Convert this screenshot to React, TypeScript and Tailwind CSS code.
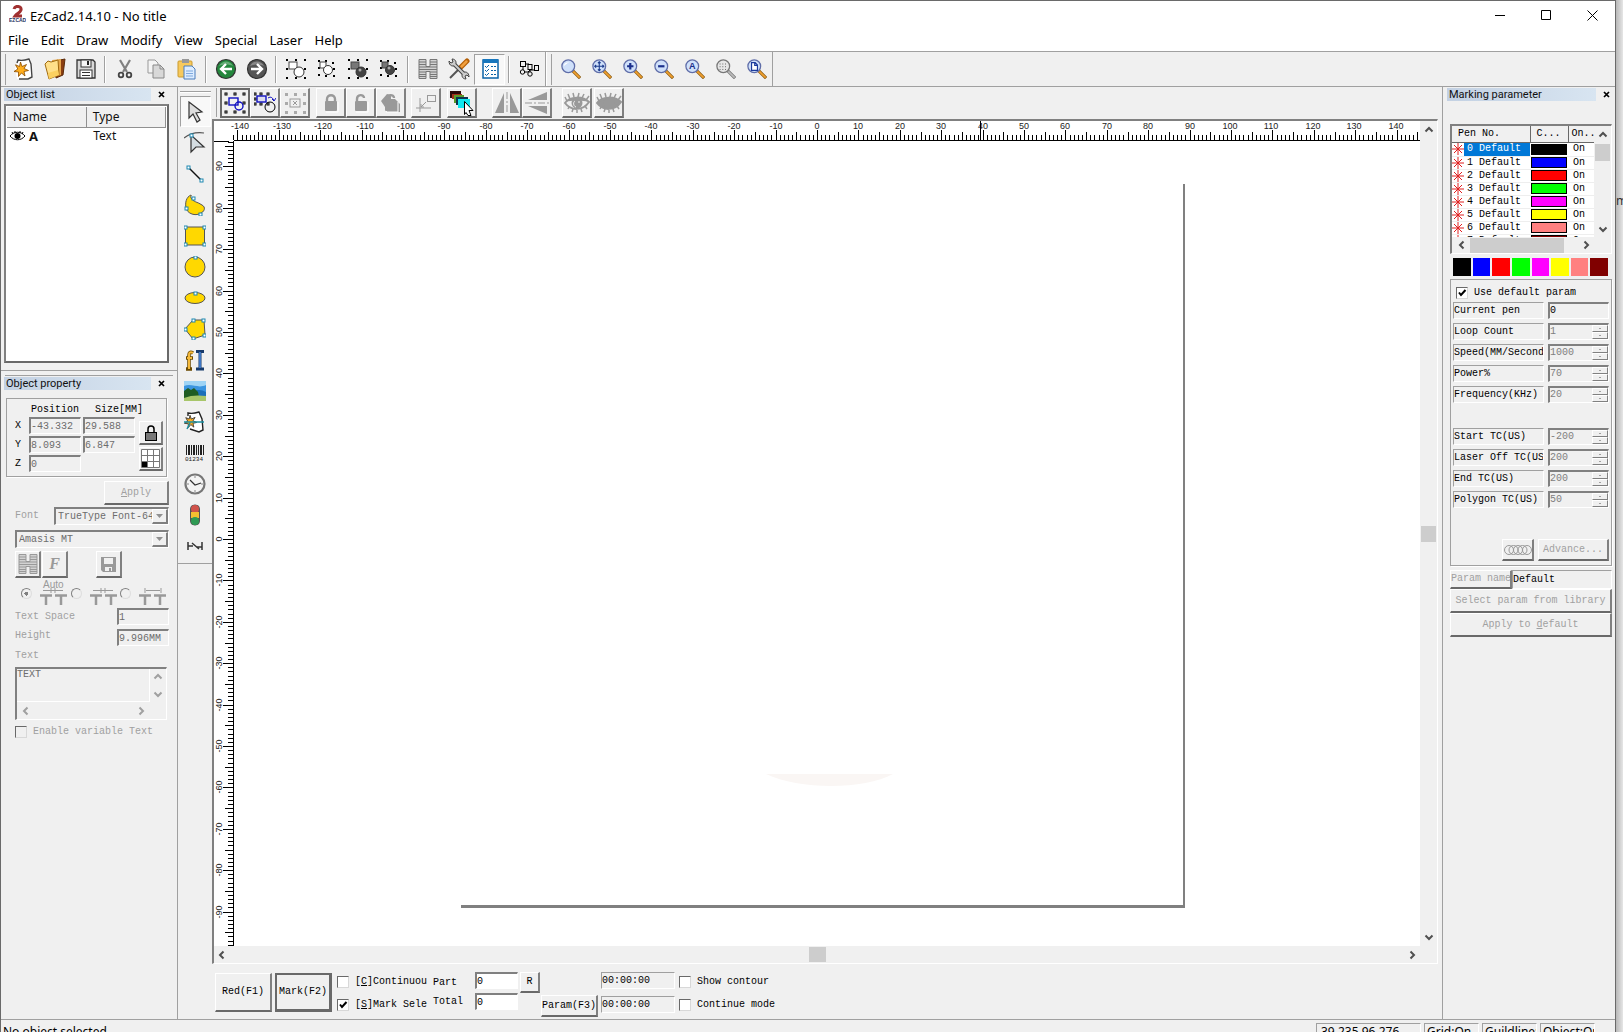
import type { ReactNode } from 'react'

const mono = "font-['Liberation_Mono','Noto_Sans_CJK_SC',monospace] text-[10px] leading-3"
const raised = 'border border-t-white border-l-white border-r-2 border-b-2 border-r-[#808080] border-b-[#696969] bg-[#f0f0f0]'
const sunken = 'border-t-2 border-l-2 border-r border-b border-t-[#808080] border-l-[#808080] border-r-white border-b-white'
const thinSunken = 'border border-t-[#a0a0a0] border-l-[#a0a0a0] border-r-white border-b-white'

const menus = ['File', 'Edit', 'Draw', 'Modify', 'View', 'Special', 'Laser', 'Help']

const pens = [
  { name: 'Default', color: 'bg-black' },
  { name: 'Default', color: 'bg-[#0000ff]' },
  { name: 'Default', color: 'bg-[#ff0000]' },
  { name: 'Default', color: 'bg-[#00ff00]' },
  { name: 'Default', color: 'bg-[#ff00ff]' },
  { name: 'Default', color: 'bg-[#ffff00]' },
  { name: 'Default', color: 'bg-[#ff8080]' },
  { name: 'Default', color: 'bg-[#800000]' },
]

const params = [
  { label: 'Current pen', value: '0' },
  { label: 'Loop Count', value: '1' },
  { label: 'Speed(MM/Second', value: '1000' },
  { label: 'Power%', value: '70' },
  { label: 'Frequency(KHz)', value: '20' },
  null,
  { label: 'Start TC(US)', value: '-200' },
  { label: 'Laser Off TC(US', value: '200' },
  { label: 'End TC(US)', value: '200' },
  { label: 'Polygon TC(US)', value: '50' },
]

function Icon({ children, size = 22 }: { children: ReactNode; size?: number }) {
  return (
    <svg width={size} height={size} viewBox="0 0 22 22" fill="none" className="shrink-0" aria-hidden="true">
      {children}
    </svg>
  )
}

function Arrow({ dir, color = '#505050' }: { dir: 'up' | 'down' | 'left' | 'right'; color?: string }) {
  const d = {
    up: 'M1.5 6.5L5 3L8.5 6.5',
    down: 'M1.5 3.5L5 7L8.5 3.5',
    left: 'M6.5 1.5L3 5L6.5 8.5',
    right: 'M3.5 1.5L7 5L3.5 8.5',
  }[dir]
  return (
    <svg width="10" height="10" viewBox="0 0 10 10" fill="none" className="shrink-0" aria-hidden="true">
      <path d={d} stroke={color} strokeWidth="2" />
    </svg>
  )
}

/* ---------- icons ---------- */

function Dots({ pts, color = '#000', size = 2 }: { pts: number[][]; color?: string; size?: number }) {
  return (
    <>
      {pts.map(([x, y]) => (
        <rect key={`${x}-${y}`} x={x} y={y} width={size} height={size} fill={color} />
      ))}
    </>
  )
}

const outerDots = [[1, 1], [10, 1], [19, 1], [1, 10], [19, 10], [1, 19], [10, 19], [19, 19]]
const innerDots = [[2, 2], [9, 2], [16, 4], [2, 9], [2, 16], [9, 17], [17, 10], [17, 17]]

const star = 'M10 5l1.500 4.500 4.500-2-2.500 4 4.500 2-4.500 1 1 4.500-3.500-3-3 3.500 0-4.500-4.500-.5 3.800-2.500-2.300-4.200 4 1.700z'

const NewIcon = () => (
  <Icon>
    <path d="M6 2c4 1 8 0 11-1l2 5 1 13-4 2H4L2 10z" fill="#fff" />
    <path d="M4 5l1-3c4 1 8 0 11-1l2 5 1 13-4 2-9 0" stroke="#444" strokeWidth="1.400" />
    <path d={star} transform="translate(-2.500 -1)" fill="#ffae1c" stroke="#8a4a00" strokeWidth=".8" />
  </Icon>
)
const OpenIcon = () => (
  <Icon>
    <path d="M11 3l10-2-2 16-7 3z" fill="#8b3f12" stroke="#5a2a0a" />
    <path d="M8 2l9-1 0 16-8 2z" fill="#e8a84c" />
    <path d="M1 6l3-3 3 1 7-2 1 15-10 4z" fill="#ffe08a" stroke="#a06a10" />
    <path d="M4 15l10-3 1 5-10 4z" fill="#fbd060" />
  </Icon>
)
const SaveIcon = () => (
  <Icon>
    <path d="M2 2h16l2 2v16H2z" fill="#d9d9d9" stroke="#333" strokeWidth="1.300" />
    <rect x="6" y="2" width="10" height="7" fill="#f6f6f6" stroke="#333" />
    <rect x="12" y="3" width="2" height="4" fill="#222" />
    <rect x="5" y="12" width="12" height="8" fill="#fff" stroke="#333" />
    <path d="M7 14.500h8M7 17.500h8" stroke="#333" />
  </Icon>
)
const CutIcon = () => (
  <Icon>
    <path d="M6 2l7 12M16 2L9 14" stroke="#808080" strokeWidth="2.200" />
    <circle cx="7" cy="17" r="2.300" stroke="#444" strokeWidth="1.800" />
    <circle cx="15" cy="17" r="2.300" stroke="#444" strokeWidth="1.800" />
  </Icon>
)
const CopyIcon = () => (
  <Icon>
    <path d="M3 2h7l3 3v10H3z" fill="#f4f4f4" stroke="#999" />
    <path d="M8 7h7l4 4v9H8z" fill="#d8d8d8" stroke="#888" />
    <path d="M15 7v4h4" stroke="#888" />
  </Icon>
)
const PasteIcon = () => (
  <Icon>
    <rect x="2" y="3" width="14" height="16" rx="1" fill="#f7c95c" stroke="#c99a2e" />
    <rect x="6" y="1" width="7" height="4" fill="#999" />
    <path d="M8 8h8l3 3v10H8z" fill="#dcecff" stroke="#4a7dbb" />
    <path d="M10 13h7M10 15.500h7M10 18h7" stroke="#7fa9dd" />
  </Icon>
)
const RoundArrow = ({ fill, left }: { fill: string; left?: boolean }) => (
  <Icon>
    <circle cx="11" cy="11" r="9.500" fill={fill} stroke="#333" strokeWidth="1.200" />
    <path d="M4 8c3-6 11-6 14 0-5-2-9-2-14 0z" fill="#fff" opacity=".3" />
    <path
      d={left ? 'M17 11H6.500M11 6l-5 5 5 5' : 'M5 11h10.500M11 6l5 5-5 5'}
      stroke="#fff"
      strokeWidth="2.400"
    />
  </Icon>
)
const GroupIcon = ({ filled, small }: { filled?: boolean; small?: boolean }) => (
  <Icon>
    <Dots pts={small ? innerDots : outerDots} />
    <rect x="4" y="4" width={small ? 6 : 8} height={small ? 6 : 7} fill={filled ? '#777' : '#fff'} stroke="#444" />
    <circle cx={small ? 12 : 14} cy={small ? 12 : 14} r={small ? 4.5 : 5} fill={filled ? '#444' : '#fff'} stroke="#333" />
    {filled && <circle cx={small ? 11 : 13} cy={small ? 10 : 12} r="1.500" fill="#aaa" />}
  </Icon>
)
const HatchIcon = ({ color = '#777' }: { color?: string }) => (
  <Icon>
    <path d="M2 1.500h7v7h4v-7h7v19h-7v-7H9v7H2z" fill="#d2d2d2" stroke={color} />
    <path d="M2 4h7M2 6.500h7M2 9h18M2 11.500h18M2 14h7M2 16.500h7M2 18.500h7M13 4h7M13 6.500h7M13 14h7M13 16.500h7M13 18.500h7" stroke={color} />
  </Icon>
)
const ToolsIcon = () => (
  <Icon>
    <path d="M2 20L13 9" stroke="#555" strokeWidth="2" />
    <path d="M13 9l6-6" stroke="#b45f06" strokeWidth="5" strokeLinecap="round" />
    <path d="M13.500 8.500l5-5" stroke="#f0a040" strokeWidth="2.500" strokeLinecap="round" />
    <path d="M5 5l12 12" stroke="#444" strokeWidth="4" />
    <path d="M1 3c0 5 4 6 6 4 2-2 1-6-3-6l1 3-2 1zM21 19c0-5-4-6-6-4-2 2-1 6 3 6l-1-3 2-1z" fill="#ccc" stroke="#444" />
    <path d="M5 5l12 12" stroke="#ccc" strokeWidth="2" />
  </Icon>
)
const ParamListIcon = () => (
  <Icon>
    <rect x="4" y="2" width="15" height="18" fill="#fff" stroke="#0a63a8" strokeWidth="1.500" />
    <rect x="4" y="1" width="15" height="4" fill="#1877bd" />
    <path d="M6 8l1.500 1.500L10 7M6 12l1.500 1.500L10 11M6 16l1.500 1.500L10 15" stroke="#0a63a8" />
    <path d="M12 8.500h5M12 12.500h5M12 16.500h5" stroke="#0a63a8" strokeDasharray="2 1" />
  </Icon>
)
const NodesIcon = () => (
  <Icon>
    <rect x="2.500" y="3.500" width="5" height="5" stroke="#000" />
    <rect x="10" y="6.500" width="4" height="5" stroke="#000" />
    <rect x="16.500" y="7.500" width="4" height="5" stroke="#000" />
    <circle cx="4.500" cy="14" r="2.200" stroke="#000" />
    <circle cx="12" cy="16" r="2.200" stroke="#000" />
    <path d="M5 9v3M8 6h3M12 12v2M6 14h4l2-2h4" stroke="#000" />
  </Icon>
)
const ZoomIcon = ({ children, gray }: { children?: ReactNode; gray?: boolean }) => (
  <Icon size={20}>
    <path d="M13 13l8 8" stroke={gray ? '#777' : '#8a5a10'} strokeWidth="3.600" />
    <path d="M13.500 13.500l7 7" stroke={gray ? '#bbb' : '#f0a030'} strokeWidth="2" />
    <circle cx="8" cy="8" r="7" fill={gray ? '#e6e6e6' : '#cfe0fa'} stroke={gray ? '#777' : '#5f6da8'} strokeWidth="1.400" />
    {children}
  </Icon>
)

const LockIcon = ({ open, double }: { open?: boolean; double?: boolean }) => (
  <Icon>
    {double && <path d="M1 9l6-7 4 1v4L5 15z" fill="#999" />}
    <path d={open ? 'M7 9V7c0-5 7-5 7-1' : 'M7 10V7c0-5 8-5 8 0v3'} stroke="#999" strokeWidth="2.400" />
    <rect x="5" y="9" width="12" height="10" rx="1" fill="#999" />
    {double && <path d="M7 7h8l5 5v8H7z" fill="#999" />}
    <path d="M6 20h12V10" stroke="#fff" />
  </Icon>
)
const EyeIcon = ({ closed }: { closed?: boolean }) => (
  <svg width="26" height="22" viewBox="0 0 26 22" fill="none" aria-hidden="true">
    <path d="M1 11C6 4 19 4 25 10 19 19 7 19 1 11z" fill={closed ? '#999' : '#f0f0f0'} stroke="#999" strokeWidth="2" />
    <path d="M3 9L1 5M6 7L4 2M10 5L9 1M14 5l1-4M18 6l2-4M22 8l3-4M5 15l-1 2M9 17l-1 3M13 18v3M17 17l1 3M21 14l2 3" stroke="#999" strokeWidth="1.500" />
    <path d="M2 10C7 4 19 4 24 10c-5-2-17-2-22 0z" fill="#999" />
    <circle cx="13" cy="11" r="5.500" fill="#999" />
    {!closed && <path d="M11 9c-2 1-2 5 1 6M15 9v2" stroke="#f0f0f0" />}
  </svg>
)

const Node = ({ x, y }: { x: number; y: number }) => (
  <rect x={x - 1} y={y - 1} width="3" height="3" fill="#fff" stroke="#1d87b0" />
)

const drawTools: { label: string; icon: ReactNode }[] = [
  {
    label: 'Pick',
    icon: (
      <Icon>
        <path d="M5 1l0 16 4-4 4 8 3-2-4-7 6-1z" fill="#ddd" stroke="#333" strokeWidth="1.200" />
      </Icon>
    ),
  },
  {
    label: 'Node edit',
    icon: (
      <Icon>
        <path d="M0 6c5-4 12-6 20-5" stroke="#555" strokeWidth="1.200" />
        <path d="M7 3l0 17 5-5 8 0z" fill="#d4dde2" stroke="#333" strokeWidth="1.200" />
        <Node x={7} y={3} />
      </Icon>
    ),
  },
  {
    label: 'Line',
    icon: (
      <Icon>
        <path d="M4 4l13 13" stroke="#111" strokeWidth="1.400" />
        <Node x={4} y={4} />
        <Node x={17} y={17} />
      </Icon>
    ),
  },
  {
    label: 'Curve',
    icon: (
      <Icon>
        <path d="M7 1C2 3 1 9 2 14c1 5 8 8 13 6 6-2 7-7 3-9-4-3-9-3-11-7-1-2 1-2 0-3z" fill="#ffd800" stroke="#555" />
        <Node x={9} y={4} />
        <Node x={2} y={14} />
        <Node x={16} y={20} />
      </Icon>
    ),
  },
  {
    label: 'Rectangle',
    icon: (
      <Icon>
        <rect x="1.500" y="2" width="19" height="18" fill="#ffd800" stroke="#555" />
        <Node x={1} y={2} />
        <Node x={20} y={2} />
        <Node x={1} y={19} />
        <Node x={20} y={19} />
      </Icon>
    ),
  },
  {
    label: 'Circle',
    icon: (
      <Icon>
        <circle cx="11" cy="11" r="10" fill="#ffd800" stroke="#555" />
        <Node x={11} y={1} />
      </Icon>
    ),
  },
  {
    label: 'Ellipse',
    icon: (
      <Icon>
        <ellipse cx="11" cy="11" rx="10" ry="5.500" fill="#ffd800" stroke="#555" />
        <Node x={11} y={6} />
      </Icon>
    ),
  },
  {
    label: 'Polygon',
    icon: (
      <Icon>
        <path d="M1 11l8-9h11l1 15-12 4z" fill="#ffd800" stroke="#555" />
        <Node x={1} y={11} />
        <Node x={9} y={2} />
        <Node x={19} y={2} />
        <Node x={20} y={17} />
        <Node x={9} y={20} />
      </Icon>
    ),
  },
  {
    label: 'Text',
    icon: (
      <Icon>
        <path d="M9 4C6 2 5 4 5 6v14M2 9h7M2 20h6" stroke="#6b4a00" strokeWidth="3.500" />
        <path d="M9 4C6 2 5 4 5 6v14M3 9h5" stroke="#f5b93a" strokeWidth="2" />
        <path d="M12 2.500h8M16 2v18M12 20h8" stroke="#173a6b" strokeWidth="3" />
        <path d="M16 3v16" stroke="#4d8be0" strokeWidth="1.500" />
      </Icon>
    ),
  },
  {
    label: 'Bitmap',
    icon: (
      <Icon>
        <rect x="0" y="1" width="22" height="20" fill="#3b95e0" />
        <path d="M0 1h22v4C14 9 8 3 0 6z" fill="#9fd4f5" />
        <path d="M9 12c4-3 9-2 13 0v9H9z" fill="#1c6fb8" />
        <path d="M0 20v-9l4-3 3 2 3-2 4 4 1 5z" fill="#1f5c22" />
        <path d="M0 21v-3c7-3 15-3 22-2v5z" fill="#a8c66a" />
      </Icon>
    ),
  },
  {
    label: 'Vector file',
    icon: (
      <Icon>
        <path d="M4 5l0-3c4 1 8 0 11-1l3 7 1 11-4 2-9-3" fill="#fff" stroke="#222" strokeWidth="1.400" />
        <path d={star} transform="translate(-2.500 0) scale(.85)" fill="#ffae1c" stroke="#333" />
        <path d="M0 11h20M6 12l-3 6" stroke="#1b8fa0" strokeWidth="1.500" />
      </Icon>
    ),
  },
  {
    label: 'Barcode',
    icon: (
      <svg width="22" height="22" viewBox="0 0 22 22" aria-hidden="true">
        <path d="M2 3h1v10h-1zM4 3h2v10h-2zM7 3h1v10h-1zM9 3h2v10h-2zM12 3h1v10h-1zM14 3h1v10h-1zM16 3h2v10h-2zM19 3h1v10h-1z" fill="#222" />
        <text x="1" y="19" fontSize="6" fontFamily="Liberation Mono, monospace" fill="#222">01234</text>
      </svg>
    ),
  },
  {
    label: 'Timer',
    icon: (
      <Icon>
        <circle cx="11" cy="11" r="9.500" fill="#f4f4f4" stroke="#777" strokeWidth="2.200" />
        <path d="M6 7l5 5 6-2" stroke="#333" strokeWidth="1.200" />
        <path d="M11 3v2M11 17v2M3 11h2M17 11h2" stroke="#888" />
      </Icon>
    ),
  },
  {
    label: 'Input',
    icon: (
      <Icon>
        <rect x="6.500" y="1" width="9" height="20" rx="4" fill="#555" stroke="#555" />
        <circle cx="11" cy="5" r="4" fill="#d0524a" />
        <path d="M7 8h8v6H7z" fill="#f5bf30" />
        <circle cx="11" cy="17" r="4" fill="#2f9a54" />
      </Icon>
    ),
  },
  {
    label: 'Encoder',
    icon: (
      <Icon>
        <path d="M4 7v8M4 11h5M8 8l7 6M18 7v8M13 12h5" stroke="#333" strokeWidth="1.500" />
      </Icon>
    ),
  },
]

type Tool = { label: string; icon: ReactNode; checked?: boolean } | null

const standardTools: Tool[] = [
  { label: 'New', icon: <NewIcon /> },
  { label: 'Open', icon: <OpenIcon /> },
  { label: 'Save', icon: <SaveIcon /> },
  null,
  { label: 'Cut', icon: <CutIcon /> },
  { label: 'Copy', icon: <CopyIcon /> },
  { label: 'Paste', icon: <PasteIcon /> },
  null,
  { label: 'Undo', icon: <RoundArrow fill="#23873c" left /> },
  { label: 'Redo', icon: <RoundArrow fill="#555" /> },
  null,
  { label: 'Combine', icon: <GroupIcon /> },
  { label: 'Uncombine', icon: <GroupIcon small /> },
  { label: 'Group', icon: <GroupIcon filled /> },
  { label: 'Ungroup', icon: <GroupIcon filled small /> },
  null,
  { label: 'Hatch', icon: <HatchIcon /> },
  { label: 'Options', icon: <ToolsIcon /> },
  { label: 'Parameter list', icon: <ParamListIcon />, checked: true },
  null,
  { label: 'Nodes', icon: <NodesIcon /> },
]

const zoomTools: Tool[] = [
  { label: 'Zoom', icon: <ZoomIcon><path d="M3 8c0-3 3-5 6-4-2 0-4 2-6 4z" fill="#fff" /></ZoomIcon> },
  { label: 'Zoom pan', icon: <ZoomIcon><path d="M8 3v10M3 8h10M6.500 4.500L8 3l1.500 1.500M6.500 11.500L8 13l1.500-1.500M4.500 6.500L3 8l1.500 1.500M11.500 6.500L13 8l-1.500 1.500" stroke="#1b3a8c" strokeWidth="1.200" /></ZoomIcon> },
  { label: 'Zoom in', icon: <ZoomIcon><path d="M8 4.500v7M4.500 8h7" stroke="#1b2f8c" strokeWidth="2.400" /></ZoomIcon> },
  { label: 'Zoom out', icon: <ZoomIcon><path d="M4.500 8h7" stroke="#1b2f8c" strokeWidth="2.400" /></ZoomIcon> },
  { label: 'Zoom all', icon: <ZoomIcon><text x="4.500" y="11.500" fontSize="10" fontWeight="700" fontFamily="Liberation Sans, sans-serif" fill="#1b2f8c">A</text></ZoomIcon> },
  { label: 'Zoom selection', icon: <ZoomIcon gray><path d="M4 5.500h9M4 8.500h9M4 11.500h9" stroke="#555" strokeDasharray="1 2" /></ZoomIcon> },
  { label: 'Zoom page', icon: <ZoomIcon><path d="M5 4h4l2.500 2.500v6H5zM8.500 4v3h3" fill="#fff" stroke="#1b3a9c" strokeWidth="1.300" /></ZoomIcon> },
]

const hollowDots = (pts: number[][]) =>
  pts.map(([x, y]) => <rect key={`${x}-${y}`} x={x} y={y} width="2" height="2" stroke="#000" />)

const modifyTools: { label: string; icon: ReactNode; gap?: string; pressed?: boolean }[] = [
  {
    label: 'Pick frame',
    pressed: true,
    icon: (
      <Icon>
        {hollowDots([[1, 1], [10, 1], [19, 1], [1, 10], [19, 10], [1, 19], [10, 19], [19, 19]])}
        <rect x="5" y="6" width="9" height="7" stroke="#1010c0" strokeWidth="1.400" />
        <circle cx="15" cy="14" r="4" stroke="#1010c0" strokeWidth="1.400" />
      </Icon>
    ),
  },
  {
    label: 'Pick rotate',
    icon: (
      <Icon>
        {hollowDots([[0, 1], [6, 1], [13, 1], [0, 11], [6, 11], [13, 11], [0, 6]])}
        <rect x="3" y="4" width="9" height="6" fill="#dde" stroke="#1010c0" strokeWidth="1.400" />
        <path d="M14 6c3-2 5 0 6 3M20 9l-2-2M20 9l2-3" stroke="#1010c0" />
        <circle cx="16" cy="15" r="5" stroke="#000" />
      </Icon>
    ),
  },
  {
    label: 'Clear frame',
    icon: (
      <Icon>
        <Dots color="#aaa" size={3} pts={outerDots} />
        <rect x="6" y="7" width="10" height="8" stroke="#999" />
        <path d="M9 9l4 4M13 9l-4 4" stroke="#999" />
      </Icon>
    ),
  },
  { label: 'Lock', gap: 'ml-[6px]', icon: <LockIcon /> },
  { label: 'Unlock', icon: <LockIcon open /> },
  { label: 'Unlock all', icon: <LockIcon open double /> },
  {
    label: 'Origin',
    gap: 'ml-[5px]',
    icon: (
      <Icon>
        <path d="M5 6v14M1 16h15M6 15l5-5M6 12v3h3" stroke="#999" />
        <rect x="12.500" y="3.500" width="8" height="6" stroke="#999" />
      </Icon>
    ),
  },
  {
    label: 'Layers',
    gap: 'ml-[6px]',
    icon: (
      <svg width="26" height="26" viewBox="0 0 26 26" aria-hidden="true">
        <rect x="1" y="1" width="11" height="7" fill="#2a0808" />
        <rect x="3" y="4" width="10" height="5" fill="#a03018" />
        <rect x="5" y="5" width="10" height="8" fill="#5a9a2a" />
        <rect x="7" y="7" width="12" height="8" fill="#0a3550" />
        <rect x="9" y="9" width="12" height="9" fill="#10e8f0" />
        <path d="M15.500 11.500l8.500 9h-4l2 5h-3l-2-3-1.500 2z" fill="#fff" stroke="#000" />
      </svg>
    ),
  },
  {
    label: 'Mirror horizontal',
    gap: 'ml-[15px]',
    icon: (
      <svg width="26" height="22" viewBox="0 0 26 22" aria-hidden="true">
        <path d="M10 1v20H1zM16 1v20h9z" fill="#999" />
        <path d="M13 0v22" stroke="#999" strokeDasharray="7 2 2 2" />
      </svg>
    ),
  },
  {
    label: 'Mirror vertical',
    icon: (
      <svg width="26" height="24" viewBox="0 0 26 24" aria-hidden="true">
        <path d="M4 9L23 1v8zM4 15l19 8v-8z" fill="#999" />
        <path d="M1 12h24" stroke="#999" strokeDasharray="7 2 2 2" />
      </svg>
    ),
  },
  { label: 'Show', gap: 'ml-[10px]', icon: <EyeIcon /> },
  { label: 'Hide', gap: 'ml-[2px]', icon: <EyeIcon closed /> },
]

/* ---------- small controls ---------- */

function ToolButtons({ tools }: { tools: Tool[] }) {
  return (
    <>
      {tools.map((t, i) =>
        t ? (
          <button
            key={t.label}
            type="button"
            aria-label={t.label}
            className={
              t.checked
                ? 'flex h-[31px] w-[31px] items-center justify-center border border-t-[#a0a0a0] border-l-[#a0a0a0] border-r-white border-b-white bg-[#f8f8f8]'
                : 'flex h-[31px] w-[31px] items-center justify-center'
            }
          >
            {t.icon}
          </button>
        ) : (
          <span key={i} className="mx-[3px] h-[27px] w-0.5 border-l border-[#a0a0a0] bg-white" />
        ),
      )}
    </>
  )
}

function Check({ children, checked, disabled }: { children: ReactNode; checked?: boolean; disabled?: boolean }) {
  return (
    <label className={`flex h-3 items-center whitespace-nowrap ${disabled ? 'text-[#a0a0a0]' : 'text-black'}`}>
      <span className="relative mr-1.5 h-3 w-3 shrink-0">
        <input
          type="checkbox"
          defaultChecked={checked}
          disabled={disabled}
          className="peer block h-3 w-3 appearance-none border border-t-[#696969] border-l-[#696969] border-r-[#d8d8d8] border-b-[#d8d8d8] bg-white disabled:bg-[#f0f0f0]"
        />
        <svg viewBox="0 0 12 12" className="pointer-events-none absolute inset-0 hidden peer-checked:block" fill="none" aria-hidden="true">
          <path d="M3 5.500l2 2.500 4.500-5" stroke="#000" strokeWidth="2" />
        </svg>
      </span>
      {children}
    </label>
  )
}

function Caption({ title, className }: { title: string; className?: string }) {
  return (
    <div className={`flex h-[13px] items-center ${className ?? ''}`}>
      <h2 className="flex h-[13px] flex-1 items-center bg-linear-to-r from-[#c3d1e3] to-[#d8e5f1] pl-0.5 font-['Roboto',sans-serif] text-[11px] leading-3 text-[#111]">
        {title}
      </h2>
      <button type="button" aria-label={`Close ${title}`} className="ml-1 flex h-3 w-3 items-center justify-center">
        <svg width="7" height="7" viewBox="0 0 7 7" aria-hidden="true">
          <path d="M1 1l5 5M6 1L1 6" stroke="#000" strokeWidth="1.700" />
        </svg>
      </button>
    </div>
  )
}

function Combo({ label, value, className }: { label: string; value: string; className?: string }) {
  return (
    <span className={`relative flex h-[18px] ${sunken} ${className ?? ''}`}>
      <select aria-label={label} disabled className="w-full appearance-none bg-transparent pr-4 pl-0.5 text-[#6d6d6d] opacity-100">
        <option>{value}</option>
      </select>
      <span className="pointer-events-none absolute top-0 right-0 flex h-full w-4 items-center justify-center border border-r-2 border-b-2 border-white border-r-[#808080] border-b-[#808080] bg-[#f0f0f0]">
        <svg width="7" height="4" viewBox="0 0 7 4" aria-hidden="true">
          <path d="M0 0h7L3.500 4z" fill="#909090" />
        </svg>
      </span>
    </span>
  )
}

function Spinner() {
  const half = 'flex h-[7px] items-center justify-center border border-t-white border-l-white border-r-[#808080] border-b-[#808080]'
  return (
    <span className="flex w-4 shrink-0 flex-col">
      <span className={half}><span className="h-px w-0.5 bg-[#a0a0a0]" /></span>
      <span className={half}><span className="h-px w-0.5 bg-[#a0a0a0]" /></span>
    </span>
  )
}

/* ---------- docks ---------- */

function ObjectList() {
  return (
    <section>
      <Caption title="Object list" className="mt-px mr-2.5 ml-[3px]" />
      <div className="mt-[3px] mr-2 ml-[3px] h-[259px] border-2 border-[#808080] border-r-[#696969] border-b-[#696969] bg-white p-px">
        <table className="w-full table-fixed border-collapse font-['Noto_Sans',sans-serif] text-xs text-[#111]">
          <thead>
            <tr className="h-[20px] bg-[#f0f0f0] text-left">
              <th className="border-r border-b border-[#909090] pl-1.5 font-normal">Name</th>
              <th className="border-r border-b border-[#909090] pl-1.5 font-normal">Type</th>
            </tr>
          </thead>
          <tbody>
            <tr className="h-[18px]">
              <td>
                <span className="flex items-center gap-1 pl-[3px]">
                  <svg width="15" height="10" viewBox="0 0 15 10" fill="none" aria-hidden="true">
                    <path d="M0 5c4-5 11-5 15 0M0 5c4 5 11 5 15 0M2 1l1 2M5 0v2M10 0v2M13 1l-1 2" stroke="#000" />
                    <circle cx="7.500" cy="5" r="3" fill="#000" />
                  </svg>
                  <b className="text-[13px] leading-4">A</b>
                </span>
              </td>
              <td className="pl-[7px]">Text</td>
            </tr>
          </tbody>
        </table>
      </div>
    </section>
  )
}

function SpacingRadio({ checked, label, caption, wide }: { checked?: boolean; label: string; caption?: string; wide?: boolean }) {
  return (
    <label className="flex items-center gap-[7px]">
      <input
        type="radio"
        name="spacing"
        aria-label={label}
        defaultChecked={checked}
        disabled
        className="h-[11px] w-[11px] appearance-none rounded-full border border-[#808080] border-r-[#ddd] border-b-[#ddd] checked:bg-[radial-gradient(circle,#808080_0_2px,transparent_2px)]"
      />
      <svg width="29" height="26" viewBox="0 0 29 26" fill="none" aria-hidden="true">
        {caption && (
          <text x="4" y="8" fontSize="10" fontFamily="Liberation Sans, sans-serif" fill="#999">{caption}</text>
        )}
        <path d={wide ? 'M7 8v5M23 8v5M8 10.500h14' : 'M4 10.500h20M12 8v5M16 8v5'} stroke="#999" />
        <path d="M1 15.500h12M7 15v10M16 15.500h12M22 15v10" stroke="#999" strokeWidth="2.500" />
      </svg>
    </label>
  )
}

function ObjectProperty() {
  const field = `h-[17px] w-[52px] bg-[#f0f0f0] text-[#6d6d6d] ${sunken}`
  return (
    <section className={mono}>
      <Caption title="Object property" className="mr-2.5 ml-[3px]" />
      <div className="mt-2 mr-2.5 ml-[5px] flex border border-[#a0a0a0] pt-[5px] pr-1 pb-1 pl-2 shadow-[1px_1px_0_#fff]">
        <div className="grid grid-cols-[12px_52px_52px] gap-x-[2px] gap-y-[2px]">
          <span className="col-start-2 h-[11px] pl-0.5">Position</span>
          <span className="h-[11px] pl-3 whitespace-nowrap">Size[MM]</span>
          <label htmlFor="x" className="pt-[3px]">X</label>
          <input id="x" disabled defaultValue="-43.332" className={field} />
          <input aria-label="Width" disabled defaultValue="29.588" className={field} />
          <label htmlFor="y" className="pt-[3px]">Y</label>
          <input id="y" disabled defaultValue="8.093" className={field} />
          <input aria-label="Height" disabled defaultValue="6.847" className={field} />
          <label htmlFor="z" className="pt-[3px]">Z</label>
          <input id="z" disabled defaultValue="0" className={field} />
        </div>
        <div className="mt-[17px] ml-1 flex flex-col gap-0.5">
          <button type="button" aria-label="Lock ratio" className={`flex h-6 w-6 items-center justify-center ${raised}`}>
            <svg width="14" height="16" viewBox="0 0 14 16" fill="none" aria-hidden="true">
              <path d="M4 8V4c0-4 6-4 6 0v4" stroke="#000" strokeWidth="1.500" />
              <rect x="1.500" y="7.500" width="11" height="8" fill="#777" stroke="#000" />
            </svg>
          </button>
          <button type="button" aria-label="Anchor" className={`flex h-6 w-6 items-center justify-center ${raised}`}>
            <svg width="19" height="19" viewBox="0 0 19 19" fill="none" aria-hidden="true">
              <path d="M.5.5h18v18H.5zM.5 6.500h18M.5 12.500h18M6.500.5v18M12.500.5v18" fill="#fff" stroke="#777" />
              <rect x="1" y="13" width="5" height="5" fill="#000" />
            </svg>
          </button>
        </div>
      </div>
      <div className="mt-1 mr-2 flex justify-end">
        <button type="button" disabled className={`h-6 w-[65px] text-[#a0a0a0] ${raised}`}>
          <u>A</u>pply
        </button>
      </div>
      <div className="mt-0.5 mr-2 ml-3.5 flex items-center text-[#a0a0a0]">
        <span className="w-[39px]">Font</span>
        <Combo label="Font type" value="TrueType Font-64" className="min-w-0 flex-1" />
      </div>
      <Combo label="Font name" value="Amasis MT" className="mt-[5px] mr-2 ml-3.5" />
      <div className="mt-[3px] ml-3.5 flex gap-px">
        <button type="button" aria-label="Hatch" className={`flex h-[27px] w-[26px] items-center justify-center ${raised}`}>
          <HatchIcon color="#999" />
        </button>
        <button type="button" aria-label="Font settings" className={`flex h-[27px] w-[26px] items-center justify-center font-['Liberation_Serif',serif] text-base font-bold text-[#999] italic ${raised}`}>
          F
        </button>
        <button type="button" aria-label="Save font" className={`ml-[27px] flex h-[27px] w-[26px] items-center justify-center ${raised}`}>
          <svg width="15" height="15" viewBox="0 0 15 15" aria-hidden="true">
            <path d="M0 0h15v15H2L0 13z" fill="#999" />
            <path d="M3 1h9v6H3zM4 10h7v4H4z" fill="#f0f0f0" />
            <path d="M8 11h2v3H8z" fill="#999" />
          </svg>
        </button>
      </div>
      <div className="mt-0.5 mr-2.5 ml-5 flex justify-between">
        <SpacingRadio checked label="Auto spacing" caption="Auto" />
        <SpacingRadio label="Edge spacing" />
        <SpacingRadio wide label="Center spacing" />
      </div>
      <div className="mt-0.5 mr-2 ml-3.5 flex flex-col gap-1 text-[#a0a0a0]">
        <label className="flex h-[17px] items-center justify-between">
          Text Space
          <input disabled defaultValue="1" className={field} />
        </label>
        <label className="flex h-[17px] items-center justify-between">
          <span className="pb-1">Height</span>
          <input disabled defaultValue="9.996MM" className={field} />
        </label>
        <label htmlFor="content" className="h-[14px]">Text</label>
      </div>
      <div className={`mt-[3px] mr-2.5 ml-3.5 grid h-[53px] grid-cols-[1fr_16px] grid-rows-[1fr_17px] ${sunken}`}>
        <textarea id="content" disabled defaultValue="TEXT" className="resize-none overflow-hidden border-r border-b border-white text-[#6d6d6d]" />
        <span className="flex flex-col items-center justify-around"><Arrow dir="up" color="#a0a0a0" /><Arrow dir="down" color="#a0a0a0" /></span>
        <span className="flex items-center justify-between px-1"><Arrow dir="left" color="#a0a0a0" /><Arrow dir="right" color="#a0a0a0" /></span>
      </div>
      <div className="mt-1.5 ml-3.5">
        <Check disabled>Enable variable Text</Check>
      </div>
    </section>
  )
}

function PenList() {
  return (
    <div className={`mt-[22px] flex h-[130px] flex-col bg-[#f0f0f0] ${sunken}`}>
      <div className="flex h-[111px]">
        <div className="min-w-0 flex-1 overflow-hidden bg-white">
          <table className="w-full table-fixed border-collapse">
            <colgroup>
              <col className="w-3" />
              <col />
              <col className="w-[38px]" />
              <col className="w-[26px]" />
            </colgroup>
            <thead>
              <tr className="h-4 bg-[#f0f0f0] text-left">
                <th colSpan={2} className="border-r border-b border-[#696969] pl-1.5 font-normal">Pen No.</th>
                <th className="border-r border-b border-[#696969] pl-1.5 font-normal">C...</th>
                <th className="border-b border-[#696969] pl-[3px] font-normal whitespace-nowrap">On..</th>
              </tr>
              <tr className="h-px" />
            </thead>
            <tbody>
              {pens.map((p, i) => (
                <tr key={i} className="h-[13px] border-b border-[#eee]">
                  <td className="p-0">
                    <svg width="12" height="12" viewBox="0 0 12 12" fill="none" className="block" aria-hidden="true">
                      <path d="M6 0v12M0 6h12M2 2l8 8M10 2l-8 8" stroke="#e02020" />
                    </svg>
                  </td>
                  <td className={i === 0 ? 'bg-[#0078d7] pl-[3px] whitespace-pre text-white' : 'pl-[3px] whitespace-pre'}>
                    {i} {p.name}
                  </td>
                  <td className="p-0">
                    <span className={`mx-px block h-[11px] border border-black ${p.color}`} />
                  </td>
                  <td className="pl-[5px]">On</td>
                </tr>
              ))}
            </tbody>
          </table>
        </div>
        <div className="flex w-[17px] flex-col items-center">
          <span className="flex h-[18px] items-center"><Arrow dir="up" /></span>
          <span className="h-[17px] w-[15px] bg-[#cdcdcd]" />
          <span className="mt-auto flex h-[17px] items-center"><Arrow dir="down" /></span>
        </div>
      </div>
      <div className="flex flex-1 items-center pr-5 pl-0.5">
        <span className="flex w-4 justify-center"><Arrow dir="left" /></span>
        <span className="h-[15px] w-[94px] bg-[#cdcdcd]" />
        <span className="ml-auto"><Arrow dir="right" /></span>
      </div>
    </div>
  )
}

function MarkingParameter() {
  return (
    <aside className={`flex w-[173px] shrink-0 flex-col border-l border-[#a0a0a0] pr-[3px] pl-1 ${mono}`}>
      <Caption title="Marking parameter" className="mt-px mb-px" />
      <div className="pl-[3px]">
        <PenList />
        <div className="mt-1 mr-1 ml-[3px] grid h-[18px] grid-cols-8 gap-0.5">
          {pens.map((p, i) => (
            <button key={i} type="button" aria-label={`Pen ${i}`} className={p.color} />
          ))}
        </div>
        <div className="mt-[3px] flex h-[287px] flex-col border border-[#a0a0a0] px-0.5 pt-[7px] pb-1 shadow-[1px_1px_0_#fff]">
          <div className="pl-[3px]">
            <Check checked>Use default param</Check>
          </div>
          <div className="mt-[3px] flex flex-col gap-1">
            {params.map((p, i) =>
              p ? (
                <label key={p.label} className="flex h-[17px] gap-1">
                  <span className={`flex w-[91px] shrink-0 items-center overflow-hidden whitespace-nowrap ${thinSunken}`}>{p.label}</span>
                  <span className={`flex min-w-0 flex-1 ${sunken}`}>
                    <input
                      defaultValue={p.value}
                      readOnly={i === 0}
                      disabled={i > 0}
                      className="min-w-0 flex-1 text-black disabled:text-[#808080]"
                    />
                    {i > 0 && <Spinner />}
                  </span>
                </label>
              ) : (
                <span key={i} className="h-[17px]" />
              ),
            )}
          </div>
          <div className="mt-auto flex justify-end gap-1">
            <button type="button" aria-label="Wobble" className={`flex h-[22px] w-8 items-center justify-center ${raised}`}>
              <svg width="28" height="12" viewBox="0 0 28 12" fill="none" stroke="#999" aria-hidden="true">
                <circle cx="5" cy="6" r="4.500" />
                <circle cx="9.500" cy="6" r="4.500" />
                <circle cx="14" cy="6" r="4.500" />
                <circle cx="18.500" cy="6" r="4.500" />
                <circle cx="23" cy="6" r="4.500" />
              </svg>
            </button>
            <button type="button" disabled className={`h-[22px] w-[71px] text-[#a0a0a0] ${raised}`}>Advance...</button>
          </div>
        </div>
        <div className="mt-1 flex h-[19px]">
          <button type="button" disabled className={`w-[62px] shrink-0 overflow-hidden whitespace-nowrap text-[#a0a0a0] ${raised}`}>Param name</button>
          <input aria-label="Param name" defaultValue="Default" className={`min-w-0 flex-1 ${thinSunken}`} />
        </div>
        <button type="button" disabled className={`h-6 w-full whitespace-nowrap text-[#a0a0a0] ${raised}`}>Select param from library</button>
        <button type="button" disabled className={`h-6 w-full text-[#a0a0a0] ${raised}`}>
          Apply to <u>d</u>efault
        </button>
      </div>
    </aside>
  )
}

/* ---------- drawing area ---------- */

const UNIT = 4.14
const ZERO_X = 603
const ZERO_Y = 418

function tickLength(u: number) {
  if (u % 10 === 0) return 10
  return u % 5 === 0 ? 8 : 5
}

// three-digit labels lean toward the centre of the ruler
function labelShift(u: number) {
  if (u <= -100) return 3
  return u >= 100 ? -1 : 0
}

function Workspace() {
  const across = Array.from({ length: 287 }, (_, i) => i - 141)
  const down = Array.from({ length: 224 }, (_, i) => 96 - i)
  return (
    <svg width="100%" height="100%" className="block bg-white" aria-label="Workspace">
      <g stroke="#000" shapeRendering="crispEdges">
        <path d="M20 19.500H1206M19.500 20V2000M0 20.500H15" />
        {across.map((u) => {
          const x = Math.round(ZERO_X + u * UNIT) + 0.5
          return <path key={u} d={`M${x} 19V${19 - tickLength(u)}`} />
        })}
        {down.map((u) => {
          const y = Math.round(ZERO_Y - u * UNIT) + 0.5
          return <path key={u} d={`M19 ${y}H${19 - tickLength(u)}`} />
        })}
      </g>
      <g fontSize="9" fontFamily="Liberation Sans, sans-serif" fill="#222" textAnchor="middle">
        {across.filter((u) => u % 10 === 0).map((u) => (
          <text key={u} x={Math.round(ZERO_X + u * UNIT) + labelShift(u)} y="8">{u}</text>
        ))}
        {down.filter((u) => u % 10 === 0 && u > -100).map((u) => (
          <text key={u} transform={`translate(8 ${Math.round(ZERO_Y - u * UNIT)}) rotate(-90)`}>{u}</text>
        ))}
      </g>
      <path d="M766.500 0V19" stroke="#000" />
      <path d="M552 653H679C650 669 585 669 552 653z" fill="#faf6f4" />
      <path d="M970 63V787" stroke="#808080" strokeWidth="2" />
      <path d="M247 785.500H971" stroke="#808080" strokeWidth="3" />
    </svg>
  )
}

function Canvas() {
  return (
    <div className="grid min-h-0 flex-1 grid-cols-[1fr_17px] grid-rows-[minmax(0,1fr)_17px] border-t-2 border-l-2 border-t-[#808080] border-l-[#808080] border-r border-b border-r-white border-b-white">
      <div className="min-w-0 overflow-hidden">
        <Workspace />
      </div>
      <div className="flex flex-col items-center justify-between py-1">
        <Arrow dir="up" />
        <span className="h-4 w-[15px] bg-[#cdcdcd]" />
        <Arrow dir="down" />
      </div>
      <div className="flex items-center justify-between px-[3px]">
        <Arrow dir="left" />
        <span className="h-[15px] w-[17px] bg-[#cdcdcd]" />
        <Arrow dir="right" />
      </div>
    </div>
  )
}

function MarkBar() {
  const box = `h-[17px] bg-white ${sunken}`
  return (
    <div className={`flex h-[55px] shrink-0 items-start pt-2 pl-[3px] ${mono}`}>
      <button type="button" className={`mt-px h-[39px] w-[57px] ${raised}`}>Red(F1)</button>
      <button type="button" className="mt-px ml-[3px] h-[39px] w-[57px] border-2 border-r-[3px] border-b-[3px] border-[#696969] bg-[#f0f0f0]">
        Mark(F2)
      </button>
      <div className="mt-1 ml-[5px] flex w-[96px] flex-col gap-[11px]">
        <Check><span>[<u>C</u>]Continuou</span></Check>
        <Check checked><span>[<u>S</u>]Mark Sele</span></Check>
      </div>
      <div className="flex flex-col gap-1">
        <label className="flex h-[17px] items-center"><span className="w-[42px] pt-1">Part</span><input defaultValue="0" className={`w-[43px] ${box}`} /></label>
        <label className="flex h-[17px] items-center"><span className="w-[42px]">Total</span><input defaultValue="0" className={`w-[43px] ${box}`} /></label>
      </div>
      <button type="button" className={`ml-0.5 h-[21px] w-5 ${raised}`}>R</button>
      <button type="button" className={`mt-[23px] ml-px h-[22px] w-[57px] ${raised}`}>Param(F3)</button>
      <div className="ml-[3px] flex w-[74px] flex-col gap-[7px]">
        <output className={`flex h-[17px] items-center ${thinSunken}`}>00:00:00</output>
        <output className={`flex h-[17px] items-center ${thinSunken}`}>00:00:00</output>
      </div>
      <div className="mt-1 ml-1 flex flex-col gap-[11px]">
        <Check>Show contour</Check>
        <Check>Continue mode</Check>
      </div>
    </div>
  )
}

export default function App() {
  return (
    <div className="flex h-screen overflow-hidden bg-[#e2e2e2]">
      <div className="flex min-w-0 flex-1 flex-col border-t border-r border-l border-[#6a6a6a] bg-[#f0f0f0] font-['Noto_Sans',sans-serif] text-xs text-black">
        <header className="flex h-[26px] shrink-0 items-center bg-white pr-[17px] pl-2">
          <svg width="17" height="18" viewBox="0 0 17 18" fill="none" aria-hidden="true">
            <path d="M5 4c1-4 8-3 7 1-1 3-4 3-6 6h7" stroke="#a03030" strokeWidth="3" />
            <text x="0" y="17" fontSize="5" fontWeight="700" fontFamily="Liberation Sans, sans-serif" fill="#223060">EZCAD</text>
          </svg>
          <h1 className="ml-1 pt-[3px] text-[13px] leading-4">EzCad2.14.10 - No title</h1>
          <div className="ml-auto flex gap-[35px] pt-0.5">
            <button type="button" aria-label="Minimize"><svg width="11" height="11" viewBox="0 0 11 11"><path d="M0 5.500h10" stroke="#000" /></svg></button>
            <button type="button" aria-label="Maximize"><svg width="11" height="11" viewBox="0 0 11 11" fill="none"><path d="M.5.5h9v9h-9z" stroke="#000" /></svg></button>
            <button type="button" aria-label="Close"><svg width="11" height="11" viewBox="0 0 11 11"><path d="M.5.5l10 10M10.500.5l-10 10" stroke="#000" /></svg></button>
          </div>
        </header>
        <nav className="flex h-[25px] shrink-0 items-center border-b border-[#a0a0a0] bg-white pt-0.5 pl-px text-[13px] leading-4">
          {menus.map((m) => (
            <button key={m} type="button" className="px-1.5">{m}</button>
          ))}
        </nav>
        <div className="flex h-[35px] shrink-0 items-center border-b border-[#a0a0a0] pl-1">
          <span className="mr-0.5 h-[31px] border-l border-[#a0a0a0]" />
          <ToolButtons tools={standardTools} />
          <span className="mx-px h-[34px] w-0.5 border-l border-[#a0a0a0] bg-white" />
          <span className="mr-[3px] ml-[3px] h-[31px] border-l border-[#a0a0a0]" />
          <ToolButtons tools={zoomTools} />
          <span className="h-[34px] border-l border-[#a0a0a0]" />
        </div>

        <div className="flex min-h-0 flex-1">
          <aside className="w-[176px] shrink-0">
            <ObjectList />
            <div className="mt-[7px] mb-px border-t border-[#a0a0a0] pt-1 pr-1 pl-1"><div className="border-b border-[#a0a0a0]" /></div>
            <ObjectProperty />
          </aside>
          <div className="flex w-[35px] shrink-0 flex-col border-l border-[#a0a0a0]">
            <div className="flex flex-col items-center border-b border-[#a0a0a0] pt-1 pb-0.5">
              <span className="mb-[3px] h-0.5 w-[31px] border-t border-[#a0a0a0] bg-white" />
              {drawTools.map((t, i) => (
                <button
                  key={t.label}
                  type="button"
                  aria-label={t.label}
                  className={
                    i === 0
                      ? 'flex h-[31px] w-[31px] items-center justify-center border border-t-[#a0a0a0] border-l-[#a0a0a0] border-r-white border-b-white bg-[#f8f8f8]'
                      : 'flex h-[31px] w-[31px] items-center justify-center'
                  }
                >
                  {t.icon}
                </button>
              ))}
            </div>
          </div>
          <main className="flex min-w-0 flex-1 flex-col">
            <div className="flex h-8 shrink-0 items-start pt-px pl-1">
              <span className="mr-[3px] h-[29px] border-l border-[#a0a0a0]" />
              {modifyTools.map((t) => (
                <button
                  key={t.label}
                  type="button"
                  aria-label={t.label}
                  className={`flex h-[30px] w-[30px] items-center justify-center ${t.gap ?? ''} ${t.pressed ? 'border-2 border-[#696969] bg-[#f0f0f0]' : raised}`}
                >
                  {t.icon}
                </button>
              ))}
            </div>
            <div className="flex min-h-0 flex-1 flex-col pr-1">
              <Canvas />
            </div>
            <MarkBar />
          </main>
          <MarkingParameter />
        </div>

        <footer className="flex h-[13px] shrink-0 gap-[3px] overflow-hidden border-t border-[#a0a0a0] pt-[3px] pr-5 pl-0.5 leading-4 whitespace-nowrap">
          <span className="flex-1 pt-px">No object selected</span>
          <span className={`h-5 w-[105px] pl-1 ${thinSunken}`}>39.235,96.276</span>
          <span className={`h-5 w-[55px] overflow-hidden pl-0.5 ${thinSunken}`}>Grid:On</span>
          <span className={`h-5 w-[55px] overflow-hidden pl-0.5 ${thinSunken}`}>Guildline:On</span>
          <span className={`h-5 w-[55px] overflow-hidden pl-0.5 ${thinSunken}`}>Object:On</span>
        </footer>
      </div>
      <div className="w-[7px] shrink-0 overflow-hidden bg-linear-to-r from-[#b8b8b8] to-[#e6e6e6] pt-[193px] font-['Noto_Sans',sans-serif] text-xs text-[#333]">m</div>
    </div>
  )
}
